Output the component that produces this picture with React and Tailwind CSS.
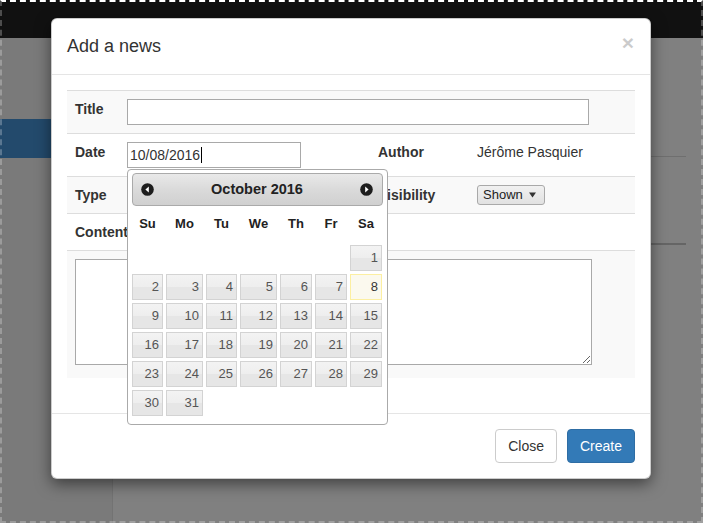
import React from "react";

const cols = "grid grid-cols-[31px_37px_31px_37px_32px_32px_32px] gap-x-[3px]";
const dayNames = ["Su", "Mo", "Tu", "We", "Th", "Fr", "Sa"];

// October 2016 starts on a Saturday
const days = [...Array(6).fill(null), ...Array.from({ length: 31 }, (_, i) => i + 1)];
const TODAY = 8;

function CircleArrow({ dir }) {
  return (
    <svg width="13" height="13" viewBox="0 0 13 13">
      <circle cx="6.5" cy="6.5" r="6.3" fill="#1d1d1d" />
      {dir === "left" ? (
        <polygon points="7.8,3.6 7.8,9.4 4.4,6.5" fill="#fff" />
      ) : (
        <polygon points="5.2,3.6 5.2,9.4 8.6,6.5" fill="#fff" />
      )}
    </svg>
  );
}

function Datepicker() {
  return (
    <div className="absolute left-[75px] top-[150px] z-10 w-[261px] rounded-[4px] border border-[#aaa] bg-white px-[4px] pt-[3px] pb-[8px] text-[#222]">
      {/* month header */}
      <div className="flex h-[33px] items-center justify-between rounded-[4px] border border-[#aaa] bg-[linear-gradient(to_bottom,#e9e9e9_0%,#dadada_50%,#d0d0d0_100%)] pl-[8px] pr-[9px]">
        <CircleArrow dir="left" />
        <span className="text-[14.5px] font-bold">October 2016</span>
        <CircleArrow dir="right" />
      </div>

      <div className={`${cols} h-[36px] items-center`}>
        {dayNames.map((d) => (
          <span key={d} className="text-center text-[13px] font-bold">
            {d}
          </span>
        ))}
      </div>

      <div className={`${cols} mt-[3px] gap-y-[3px]`}>
        {days.map((d, i) =>
          d === null ? (
            <span key={i} className="h-[26px]" />
          ) : d === TODAY ? (
            <span
              key={i}
              className="h-[26px] border border-[#fcefa1] bg-[#fbf9ee] pr-[3px] text-right text-[13px] leading-[24px] text-[#363636]"
            >
              {d}
            </span>
          ) : (
            <span
              key={i}
              className="h-[26px] border border-[#d3d3d3] bg-[linear-gradient(to_bottom,#f3f3f3_0%,#eeeeee_50%,#e6e6e6_50%,#e6e6e6_100%)] pr-[3px] text-right text-[13px] leading-[24px] text-[#555]"
            >
              {d}
            </span>
          )
        )}
      </div>
    </div>
  );
}

const row = "grid grid-cols-[52px_251px_99px_166px] border-t border-[#ddd]";
const cell = "p-[8px] leading-[20px]";
const label = "p-[8px] leading-[20px] font-bold";

export default function App() {
  return (
    <div className="relative h-[523px] w-[703px] overflow-hidden bg-[#808080] font-['Liberation_Sans',Arial,sans-serif] text-[14px] text-[#333]">
      {/* page behind the backdrop */}
      <div className="h-[38px] bg-[#111]" />
      <div className="flex h-[485px]">
        <aside className="w-[113px] shrink-0 border-r border-[#737373] bg-[#7a7a7a] pt-[81px]">
          <div className="h-[39px] bg-[#234a6c]" />
        </aside>
        <main className="flex flex-1 flex-col items-end pr-[17px] pt-[118px]">
          <div className="h-px w-[300px] bg-[#6f6f6f]" />
          <div className="mt-[86px] h-[2px] w-[300px] bg-[#656565]" />
        </main>
      </div>

      {/* modal */}
      <div className="absolute left-[51px] top-[18px] w-[600px] rounded-[6px] border border-black/20 bg-white shadow-[0_5px_15px_rgba(0,0,0,0.5)]">
        <div className="flex items-start justify-between border-b border-[#e5e5e5] p-[15px]">
          <h4 className="text-[18px] leading-[25px]">Add a news</h4>
          <button className="mt-[-2px] mr-[1px] text-[21px] font-bold leading-none text-black opacity-20">×</button>
        </div>

        <div className="relative p-[15px]">
          <div className="mb-[20px]">
            <div className={`${row} bg-[#f9f9f9]`}>
              <div className={label}>Title</div>
              <div className={`${cell} col-span-3`}>
                <input className="block h-[26px] w-[462px] border border-[#a9a9a9] bg-white px-[2px]" />
              </div>
            </div>

            <div className={row}>
              <div className={label}>Date</div>
              <div className={cell}>
                <div className="flex h-[26px] w-[174px] items-center border border-[#a9a9a9] bg-white px-[2px]">
                  <span>10/08/2016</span>
                  <span className="ml-[1px] h-[16px] w-px bg-black" />
                </div>
              </div>
              <div className={label}>Author</div>
              <div className={cell}>Jérôme Pasquier</div>
            </div>

            <div className={`${row} bg-[#f9f9f9]`}>
              <div className={label}>Type</div>
              <div className={cell} />
              <div className={label}>Visibility</div>
              <div className={cell}>
                <div className="flex h-[20px] w-[68px] items-center justify-between rounded-[3px] border border-[#a9a9a9] bg-[linear-gradient(to_bottom,#f1f1f1,#e1e1e1)] pl-[5px] pr-[8px] text-[13px] text-[#222]">
                  <span>Shown</span>
                  <svg width="7" height="6" viewBox="0 0 7 6">
                    <polygon points="0,0.5 7,0.5 3.5,5.5" fill="#333" />
                  </svg>
                </div>
              </div>
            </div>

            <div className={row}>
              <div className={`${label} col-span-4`}>Content</div>
            </div>

            <div className={`${row} bg-[#f9f9f9]`}>
              <div className="col-span-4 px-[8px] pt-[8px] pb-[13px]">
                <textarea className="block h-[106px] w-[517px] resize border border-[#a9a9a9] bg-white" />
              </div>
            </div>
          </div>
        </div>

        <div className="flex justify-end gap-[10px] border-t border-[#e5e5e5] p-[15px]">
          <button className="rounded-[4px] border border-[#ccc] bg-white px-[12px] py-[6px] leading-[20px] text-[#333]">
            Close
          </button>
          <button className="rounded-[4px] border border-[#2e6da4] bg-[#337ab7] px-[12px] py-[6px] leading-[20px] text-white">
            Create
          </button>
        </div>

        <Datepicker />
      </div>

      {/* dashed frame */}
      <div className="pointer-events-none absolute inset-0 border-2 border-dashed border-white/25 border-t-white" />
    </div>
  );
}
